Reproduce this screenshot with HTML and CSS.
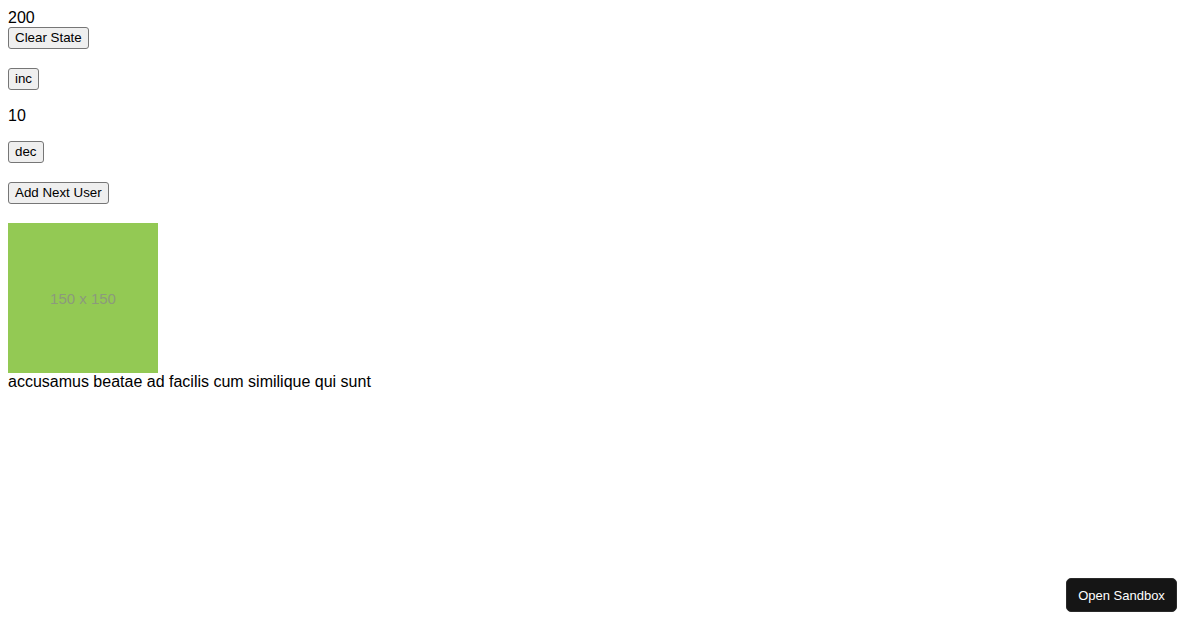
FILE: index.html
```html
<!DOCTYPE html>
<html>
<head>
<meta charset="utf-8">
<link rel="stylesheet" href="styles.css">
</head>
<body>
<div class="app">
  <div class="count">200</div>
  <div class="row row-first"><button class="btn">Clear State</button></div>
  <div class="row row-inc"><button class="btn">inc</button></div>
  <p class="value">10</p>
  <div class="row"><button class="btn">dec</button></div>
  <div class="row"><button class="btn">Add Next User</button></div>
  <div class="user">
    <div class="avatar">150 x 150</div>
    <div class="name">accusamus beatae ad facilis cum similique qui sunt</div>
  </div>
</div>
<button class="sandbox">Open Sandbox</button>
</body>
</html>
```

FILE: styles.css
```css
body {
  margin: 8px;
  font-family: "Liberation Sans", Arial, sans-serif;
  font-size: 16px;
  color: #000;
  background: #fff;
}
.count {
  line-height: 19px;
}
.row {
  margin: 16px 0;
  height: 25px;
}
.row-first {
  margin-top: 0;
}
.row-inc {
  height: 22px;
}
.value {
  margin: 16px 0;
  line-height: 19px;
}
.btn {
  display: block;
  font-family: "Liberation Sans", Arial, sans-serif;
  font-size: 13.333px;
  line-height: 16px;
  padding: 2px 6px;
  border: 1px solid #767676;
  border-radius: 3px;
  background: #efefef;
  color: #000;
}
.user {
  margin-top: 16px;
}
.avatar {
  width: 150px;
  height: 150px;
  background: #93c954;
  color: #8c9a7c;
  display: flex;
  align-items: center;
  justify-content: center;
  font-size: 15px;
}
.name {
  line-height: 18px;
}
.sandbox {
  position: fixed;
  right: 23px;
  bottom: 18px;
  width: 111px;
  height: 34px;
  background: #151515;
  color: #fff;
  border: 1px solid #2a2a2a;
  border-radius: 5px;
  font-family: "Liberation Sans", Arial, sans-serif;
  font-size: 13px;
  padding: 0;
}
```
